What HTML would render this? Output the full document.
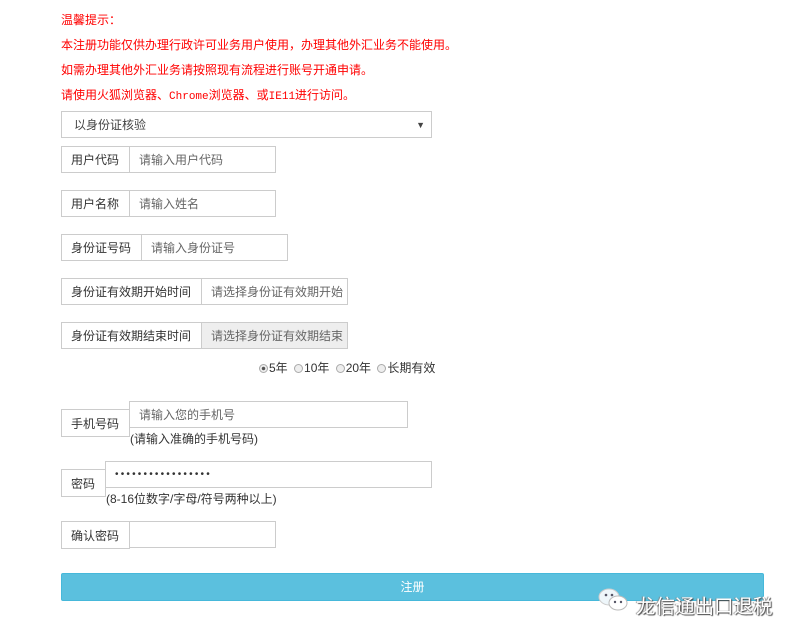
<!DOCTYPE html>
<html><head><meta charset="utf-8"><style>
body{margin:0;width:801px;height:636px;background:#fff;position:relative;overflow:hidden;font-family:"Liberation Sans","Noto Sans CJK SC","WenQuanYi Zen Hei",sans-serif;font-size:12px;color:#333}
.a{position:absolute;box-sizing:border-box}
.r{color:#f00;left:61px;line-height:14px}
.l{border:1px solid #ccc;background:#fff;padding-left:9px;display:flex;align-items:center;font-size:12px;color:#333}
.i{border:1px solid #ccc;background:#fff;padding-left:9px;display:flex;align-items:center;color:#666}
.rad{display:inline-block;width:7px;height:7px;border:1px solid #aaa;border-radius:50%;background:#eee;vertical-align:-1px;margin-right:1px}
</style></head><body>
<div class="a r" style="top:13px">温馨提示：</div>
<div class="a r" style="top:38px">本注册功能仅供办理行政许可业务用户使用，办理其他外汇业务不能使用。</div>
<div class="a r" style="top:63px">如需办理其他外汇业务请按照现有流程进行账号开通申请。</div>
<div class="a r" style="top:88px">请使用火狐浏览器、<span style="font-family:'Liberation Mono',monospace;font-size:11px">Chrome</span>浏览器、或<span style="font-family:'Liberation Mono',monospace;font-size:11px">IE11</span>进行访问。</div>
<div class="a i" style="left:61px;top:111px;width:371px;height:27px;padding-left:12px;color:#444">以身份证核验<span style="position:absolute;right:6px;font-size:9px;color:#444">▼</span></div>

<div class="a l" style="left:61px;top:146px;width:69px;height:27px">用户代码</div>
<div class="a i" style="left:129px;top:146px;width:147px;height:27px">请输入用户代码</div>
<div class="a l" style="left:61px;top:190px;width:69px;height:27px">用户名称</div>
<div class="a i" style="left:129px;top:190px;width:147px;height:27px">请输入姓名</div>
<div class="a l" style="left:61px;top:234px;width:81px;height:27px">身份证号码</div>
<div class="a i" style="left:141px;top:234px;width:147px;height:27px">请输入身份证号</div>
<div class="a l" style="left:61px;top:278px;width:141px;height:27px">身份证有效期开始时间</div>
<div class="a i" style="left:201px;top:278px;width:147px;height:27px;overflow:hidden;white-space:nowrap">请选择身份证有效期开始</div>
<div class="a l" style="left:61px;top:322px;width:141px;height:27px">身份证有效期结束时间</div>
<div class="a i" style="left:201px;top:322px;width:147px;height:27px;background:#eee;overflow:hidden;white-space:nowrap">请选择身份证有效期结束</div>
<div class="a" style="left:259px;top:359px;white-space:nowrap;color:#333;word-spacing:3px"><span class="rad" style="background:radial-gradient(#555 30%,#eee 40%)"></span>5年 <span class="rad"></span>10年 <span class="rad"></span>20年 <span class="rad"></span>长期有效</div>

<div class="a l" style="left:61px;top:409px;width:69px;height:28px">手机号码</div>
<div class="a i" style="left:129px;top:401px;width:279px;height:27px">请输入您的手机号</div>
<div class="a" style="left:130px;top:430px">(请输入准确的手机号码)</div>
<div class="a l" style="left:61px;top:469px;width:45px;height:28px">密码</div>
<div class="a i" style="left:105px;top:461px;width:327px;height:27px;color:#333;letter-spacing:2.2px;font-size:10px">•••••••••••••••••</div>
<div class="a" style="left:106px;top:490px">(8-16位数字/字母/符号两种以上)</div>
<div class="a l" style="left:61px;top:521px;width:69px;height:28px">确认密码</div>
<div class="a i" style="left:129px;top:521px;width:147px;height:27px"></div>

<div class="a" style="left:61px;top:573px;width:703px;height:28px;background:#5bc0de;border:1px solid #46b8da;border-radius:2px;color:#fff;text-align:center;line-height:26px">注册</div>

<svg class="a" style="left:597px;top:588px" width="32" height="24" viewBox="0 0 32 24"><ellipse cx="12" cy="9" rx="10" ry="8" fill="#eef6fa" stroke="#ccc"/><ellipse cx="21" cy="15" rx="9" ry="7" fill="#fff" stroke="#bbb"/><circle cx="9" cy="7" r="1.3" fill="#556"/><circle cx="15" cy="7" r="1.3" fill="#556"/><circle cx="18" cy="14" r="1.2" fill="#556"/><circle cx="24" cy="14" r="1.2" fill="#556"/></svg>
<div class="a" style="left:636px;top:590px;font-size:19.5px;color:#fff;text-shadow:1px 1px 1px #444,-1px 0 1px #888;white-space:nowrap">龙信通出口退税</div>
</body></html>
